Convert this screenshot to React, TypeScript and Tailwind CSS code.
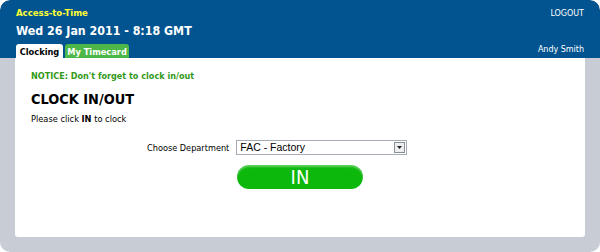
import React from "react";

export default function App() {
  const font = { fontFamily: '"DejaVu Sans Condensed", "DejaVu Sans", Verdana, sans-serif' };
  return (
    <div className="w-[600px] h-[252px] bg-white" style={font}>
      <div className="w-[600px] h-[252px] rounded-[10px] bg-[#c8cdd5] flex flex-col overflow-hidden">
        <div className="h-[58px] bg-[#01548f] rounded-t-[10px] flex justify-between px-[16px] shrink-0">
          <div className="flex flex-col">
            <div className="text-[9.5px] font-bold text-[#ffff33] mt-[7px] leading-[12px]">Access-to-Time</div>
            <div className="text-[12.3px] font-bold text-white mt-[5px] leading-[14px]">Wed 26 Jan 2011 - 8:18 GMT</div>
            <div className="flex gap-[2px] mt-[6px] items-end">
              <div className="h-[14px] w-[47px] bg-white rounded-t-[3px] text-[9.2px] font-bold text-black leading-[15px] text-center">Clocking</div>
              <div className="h-[14px] w-[64px] bg-[#4db848] rounded-t-[3px] text-[9.2px] font-bold text-white leading-[15px] text-center">My Timecard</div>
            </div>
          </div>
          <div className="flex flex-col items-end text-white text-[8.9px]">
            <div className="mt-[7px] leading-[12px]">LOGOUT</div>
            <div className="mt-[24px] leading-[12px]">Andy Smith</div>
          </div>
        </div>
        <div className="mx-[15px] mb-[15px] flex-1 bg-white rounded-b-[3px] flex flex-col px-[16px]">
          <div className="text-[9px] font-bold text-[#33991a] mt-[12px] leading-[12px]">NOTICE: Don't forget to clock in/out</div>
          <div className="text-[14.4px] font-bold text-black mt-[9px] leading-[16px]">CLOCK IN/OUT</div>
          <div className="text-[9.2px] text-black mt-[6px] leading-[12px]">
            Please click <b>IN</b> to clock
          </div>
          <div className="flex items-center mt-[15px] ml-[116px] gap-[7px]">
            <span className="text-[9.1px] text-black leading-[12px]">Choose Department</span>
            <div className="w-[171px] h-[15px] border border-[#a5acb5] flex items-center justify-between bg-white">
              <span className="text-[10.5px] pl-[3px] leading-[13px]" style={{ fontFamily: '"Liberation Sans", Arial, sans-serif' }}>FAC - Factory</span>
              <div className="w-[11px] h-[11px] mr-[1px] border border-[#8a8f96] bg-[#eceef0] flex items-center justify-center">
                <svg width="5" height="3" viewBox="0 0 5 3"><path d="M0 0h5L2.5 3z" fill="#222" /></svg>
              </div>
            </div>
          </div>
          <div className="flex mt-[10px] ml-[206px]">
            <div className="w-[126px] h-[24px] rounded-full bg-[#0cb80c] flex items-center justify-center text-white text-[20px] leading-[24px] shadow-[inset_0_2px_2px_rgba(255,255,255,0.35)]">IN</div>
          </div>
        </div>
      </div>
    </div>
  );
}
